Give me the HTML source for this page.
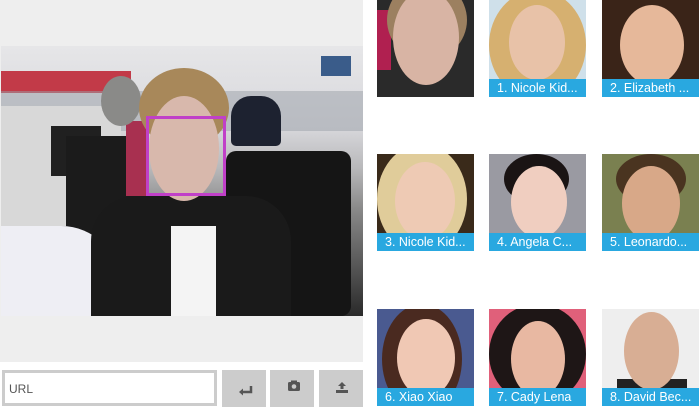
<!DOCTYPE html>
<html><head><meta charset="utf-8"><style>
*{margin:0;padding:0;box-sizing:border-box}
body{width:700px;height:407px;background:#fff;position:relative;overflow:hidden;font-family:"Liberation Sans",sans-serif}
.a{position:absolute}
.cell{position:absolute;width:97px;height:97px;overflow:hidden}
.lab{position:absolute;left:0;bottom:0;width:100%;height:18px;background:#29a8e0;color:#fff;font-size:12.5px;line-height:18px;padding-left:8px;white-space:nowrap}
.e{position:absolute;border-radius:50%}
</style></head><body>
<div class="a" style="left:0;top:0;width:363px;height:362px;background:#eeeeee"></div>
<!-- video -->
<div class="a" style="left:1px;top:46px;width:362px;height:270px;overflow:hidden;background:linear-gradient(#e6e6e8 0%,#d8d8dc 30%,#b9b9bb 45%,#8a8a8a 60%,#2a2a2a 100%)">
 <div class="a" style="left:0;top:25px;width:130px;height:22px;background:#c23a48"></div>
 <div class="a" style="left:0;top:45px;width:362px;height:40px;background:#9aa0a8;opacity:.5"></div>
 <div class="a" style="left:0;top:60px;width:120px;height:120px;background:#d8d8d8"></div>
 <div class="a" style="left:50px;top:80px;width:50px;height:50px;background:#202020"></div>
 <div class="a" style="left:65px;top:90px;width:70px;height:130px;background:#1b1b1b"></div>
 <div class="a" style="left:225px;top:105px;width:125px;height:165px;background:#151515;border-radius:10px"></div>
 <div class="a" style="left:230px;top:50px;width:50px;height:50px;background:#1d2230;border-radius:40% 40% 10% 10%"></div>
 <div class="a" style="left:320px;top:10px;width:30px;height:20px;background:#3a5c8a"></div>
 <div class="a" style="left:125px;top:75px;width:20px;height:75px;background:#a83050"></div>
 <div class="e" style="left:100px;top:30px;width:40px;height:50px;background:#8a8a88"></div>
 <div class="a" style="left:0;top:180px;width:120px;height:90px;background:#eeeef4;border-radius:0 60px 0 0"></div>
 <div class="a" style="left:90px;top:150px;width:200px;height:130px;background:#1a1a1a;border-radius:45px 45px 0 0"></div>
 <div class="a" style="left:170px;top:180px;width:45px;height:90px;background:#f4f4f4"></div>
 <div class="e" style="left:138px;top:22px;width:90px;height:80px;background:#a8885a"></div>
 <div class="e" style="left:148px;top:50px;width:70px;height:105px;background:#d8b8ac"></div>
 <div class="a" style="left:145px;top:70px;width:80px;height:80px;border:3px solid #c040c8"></div>
</div>
<!-- input row -->
<div class="a" style="left:2px;top:370px;width:215px;height:36px;background:#fff;border:3px solid #cccccc"></div>
<div class="a" style="left:9px;top:382px;font-size:12px;color:#555">URL</div>
<div class="a" style="left:222px;top:370px;width:44px;height:37px;background:#cccccc"></div>
<div class="a" style="left:270px;top:370px;width:44px;height:37px;background:#cccccc"></div>
<div class="a" style="left:319px;top:370px;width:44px;height:37px;background:#cccccc"></div>
<svg class="a" style="left:222px;top:370px" width="141" height="37">
 <path d="M29 16v6h-9" stroke="#555" stroke-width="2.5" fill="none"/><path d="M17 22l4-3.5v7z" fill="#555"/>
 <rect x="66" y="12" width="12" height="9" rx="1.5" fill="#555"/><rect x="69" y="10.5" width="6" height="2.5" fill="#555"/><circle cx="72" cy="16.5" r="2.3" fill="#ccc"/>
 <path d="M120 12l-4 4h2.5v3h3v-3h2.5z" fill="#555"/><rect x="114" y="20" width="12" height="3" fill="#555"/>
</svg>
<!-- grid -->
<div class="cell" style="left:377px;top:0;background:#2a2a2a">
 <div class="a" style="left:0;top:10px;width:14px;height:60px;background:#b02050"></div>
 <div class="e" style="left:10px;top:-20px;width:80px;height:80px;background:#9c8060"></div>
 <div class="e" style="left:16px;top:-10px;width:66px;height:95px;background:#d8b4a4"></div>
</div>
<div class="cell" style="left:489px;top:0;background:#cfe0ea">
 <div class="e" style="left:0;top:-10px;width:97px;height:110px;background:#d6b070"></div>
 <div class="e" style="left:20px;top:5px;width:56px;height:75px;background:#e8c2a8"></div>
 <div class="lab">1. Nicole Kid...</div></div>
<div class="cell" style="left:602px;top:0;background:#3a2418">
 <div class="e" style="left:18px;top:5px;width:64px;height:80px;background:#e6b89a"></div>
 <div class="lab">2. Elizabeth ...</div></div>
<div class="cell" style="left:377px;top:154px;background:#3a2a1a">
 <div class="e" style="left:0;top:-10px;width:90px;height:110px;background:#e0cc9a"></div>
 <div class="e" style="left:18px;top:8px;width:60px;height:78px;background:#eecab4"></div>
 <div class="lab">3. Nicole Kid...</div></div>
<div class="cell" style="left:489px;top:154px;background:#9a9aa2">
 <div class="e" style="left:15px;top:0;width:65px;height:50px;background:#1a1414"></div>
 <div class="e" style="left:22px;top:12px;width:56px;height:72px;background:#f0cec0"></div>
 <div class="lab">4. Angela C...</div></div>
<div class="cell" style="left:602px;top:154px;background:#7a8050">
 <div class="e" style="left:14px;top:0;width:70px;height:50px;background:#4a3420"></div>
 <div class="e" style="left:20px;top:12px;width:58px;height:75px;background:#d8a888"></div>
 <div class="lab">5. Leonardo...</div></div>
<div class="cell" style="left:377px;top:309px;background:#4a5a90">
 <div class="e" style="left:5px;top:-5px;width:80px;height:110px;background:#4a2a20"></div>
 <div class="e" style="left:20px;top:10px;width:58px;height:78px;background:#f0c8b4"></div>
 <div class="lab">6. Xiao Xiao</div></div>
<div class="cell" style="left:489px;top:309px;background:#e0607a">
 <div class="e" style="left:0;top:-5px;width:97px;height:100px;background:#1e1616"></div>
 <div class="e" style="left:22px;top:12px;width:54px;height:76px;background:#e8b8a2"></div>
 <div class="lab">7. Cady Lena</div></div>
<div class="cell" style="left:602px;top:309px;background:#eeeeee">
 <div class="a" style="left:15px;top:70px;width:70px;height:30px;background:#222"></div>
 <div class="e" style="left:22px;top:3px;width:55px;height:78px;background:#d8ae94"></div>
 <div class="lab">8. David Bec...</div></div>
</body></html>
